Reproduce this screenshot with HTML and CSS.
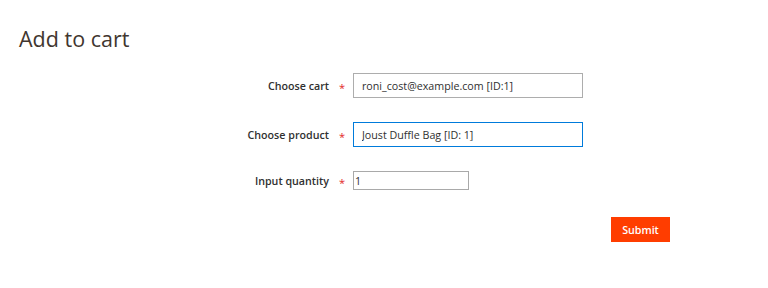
FILE: index.html
```html
<!DOCTYPE html>
<html>
<head>
  <meta charset="UTF-8">
  <link rel="stylesheet" href="styles.css">
  <title>Add to cart</title>
</head>
<body>
  <div class="page">
    <h1 class="title">Add to cart</h1>
    <form class="cart-form">
      <div class="row">
        <label class="label" for="cart">Choose cart</label>
        <span class="req">*</span>
        <input class="field" id="cart" type="text" value="roni_cost@example.com [ID:1]">
      </div>
      <div class="row">
        <label class="label" for="product">Choose product</label>
        <span class="req">*</span>
        <input class="field focus" id="product" type="text" value="Joust Duffle Bag [ID: 1]">
      </div>
      <div class="row">
        <label class="label" for="qty">Input quantity</label>
        <span class="req">*</span>
        <input class="qty" id="qty" type="text" value="1">
      </div>
      <div class="actions">
        <button class="button" type="button">Submit</button>
      </div>
    </form>
  </div>
</body>
</html>
```

FILE: styles.css
```css
body {
    margin: 0;
    background: #ffffff;
    font-family: "Open Sans", "Liberation Sans", sans-serif;
    color: #41362f;
}
.page {
    padding: 23px 19px;
}
.title {
    margin: 0 0 18px 0;
    font-size: 21.5px;
    font-weight: 400;
    line-height: 32px;
    color: #41362f;
}
.cart-form {
    width: 651px;
}
.row {
    display: flex;
    align-items: center;
    margin-bottom: 24px;
}
.label {
    width: 310px;
    text-align: right;
    font-size: 10.7px;
    font-weight: 600;
    color: #303030;
}
.req {
    width: 22px;
    padding-top: 5px;
    padding-left: 2px;
    text-align: center;
    color: #e22626;
    font-size: 11px;
    line-height: 14px;
}
.field {
    box-sizing: border-box;
    width: 230px;
    height: 25px;
    padding: 0 8px;
    border: 1px solid #adadad;
    font-family: inherit;
    font-size: 10.7px;
    color: #303030;
    outline: none;
}
.field.focus {
    border-color: #007bdb;
}
.qty {
    box-sizing: border-box;
    width: 116px;
    height: 19px;
    padding: 0 1px;
    border: 1px solid #a9a9a9;
    font-family: inherit;
    font-size: 10.7px;
    color: #303030;
}
.actions {
    display: flex;
    justify-content: flex-end;
    margin-top: 27px;
}
.button {
    width: 59px;
    height: 25px;
    border: none;
    background: #ff3d00;
    color: #ffffff;
    font-family: inherit;
    font-size: 10.7px;
    font-weight: 600;
    cursor: pointer;
}
```
